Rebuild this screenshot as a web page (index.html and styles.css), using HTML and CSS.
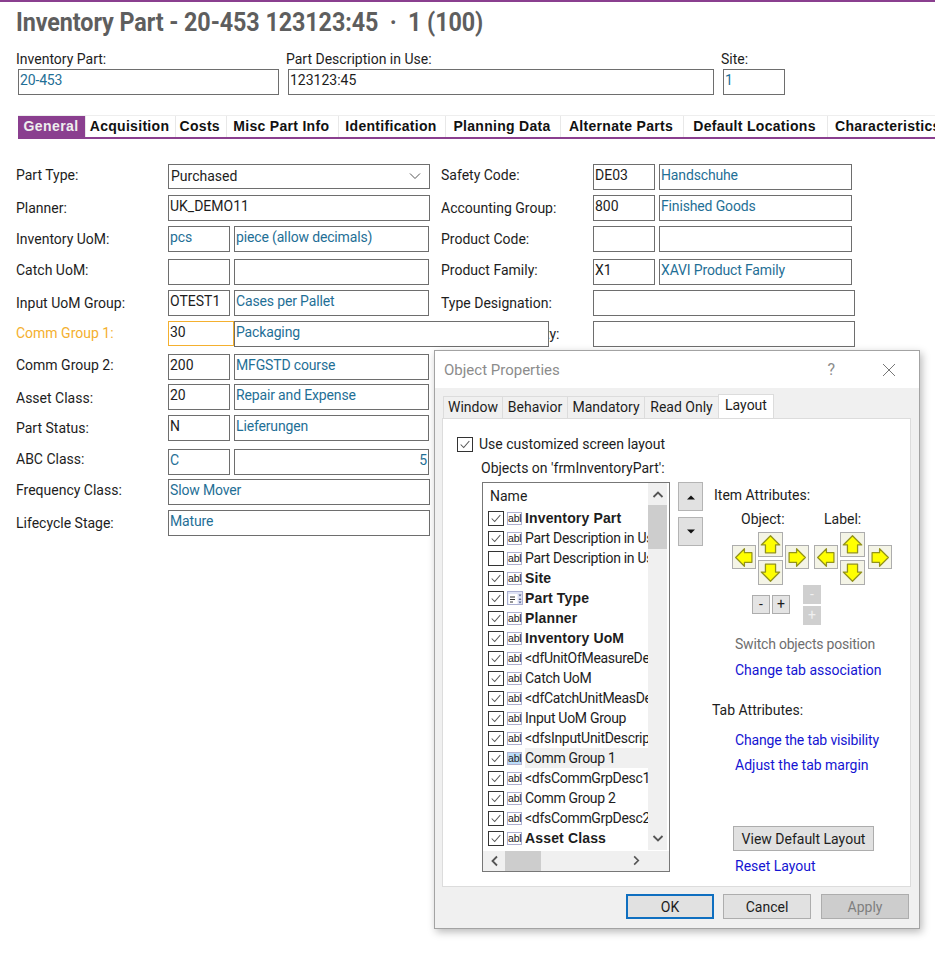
FILE: index.html
```html
<!DOCTYPE html>
<html lang="en">
<head>
<meta charset="utf-8">
<title>Inventory Part</title>
<link rel="stylesheet" href="styles.css">
</head>
<body>
<svg class="defs" aria-hidden="true">
  <symbol id="check" viewBox="0 0 16 15"><path d="M3 7.5 6.5 11 13 3.5" fill="none" stroke="#555" stroke-width="1.2"/></symbol>
  <symbol id="arrow" viewBox="0 0 25 25"><path d="M12.5 3 22.500 13H18V21.500H7V13H2.500Z" fill="#ffff00" stroke="#93931a" stroke-width="1.4" stroke-linejoin="round"/></symbol>
  <symbol id="chev" viewBox="0 0 12 12"><path d="M1.5 8 6 3.5 10.500 8" fill="none" stroke="#555" stroke-width="1.8"/></symbol>
  <symbol id="tri" viewBox="0 0 10 6"><path d="M1 5.500 5 1.500 9 5.500Z" fill="#111"/></symbol>
</svg>
<div class="page">
  <h1 class="title">Inventory Part - 20-453 123123:45 &nbsp;·&nbsp; 1 (100)</h1>
  <div class="head">
    <div class="head-group g1"><label>Inventory Part:</label><div class="box teal w261">20-453</div></div>
    <div class="head-group g2"><label>Part Description in Use:</label><div class="box w426">123123:45</div></div>
    <div class="head-group"><label>Site:</label><div class="box teal w62">1</div></div>
  </div>
  <div class="tabs">
    <div class="tab active">General</div>
    <div class="tab">Acquisition</div>
    <div class="tab">Costs</div>
    <div class="tab">Misc Part Info</div>
    <div class="tab">Identification</div>
    <div class="tab">Planning Data</div>
    <div class="tab">Alternate Parts</div>
    <div class="tab">Default Locations</div>
    <div class="tab last">Characteristics</div>
  </div>
  <div class="form">
    <div class="lab up2">Part Type:</div>
    <div class="box select w262"><span>Purchased</span><svg class="caret" viewBox="0 0 12 8"><path d="M1 1.500 6 6.500 11 1.500" fill="none" stroke="#555" stroke-width="1"/></svg></div>
    <div class="lab up2 rlab">Safety Code:</div>
    <div class="fields"><div class="box w62">DE03</div><div class="box teal w193">Handschuhe</div></div>

    <div class="lab">Planner:</div>
    <div class="box w262">UK_DEMO11</div>
    <div class="lab rlab">Accounting Group:</div>
    <div class="fields"><div class="box w62">800</div><div class="box teal w193">Finished Goods</div></div>

    <div class="lab">Inventory UoM:</div>
    <div class="fields"><div class="box teal w62">pcs</div><div class="box teal w195">piece (allow decimals)</div></div>
    <div class="lab rlab">Product Code:</div>
    <div class="fields"><div class="box w62"></div><div class="box w193"></div></div>

    <div class="lab up2">Catch UoM:</div>
    <div class="fields"><div class="box w62"></div><div class="box w195"></div></div>
    <div class="lab up2 rlab">Product Family:</div>
    <div class="fields"><div class="box w62">X1</div><div class="box teal w193">XAVI Product Family</div></div>

    <div class="lab">Input UoM Group:</div>
    <div class="fields"><div class="box w62">OTEST1</div><div class="box teal w195">Cases per Pallet</div></div>
    <div class="lab rlab">Type Designation:</div>
    <div class="box w262">&nbsp;</div>

    <div class="lab focus">Comm Group 1:</div>
    <div class="fields over"><div class="box active-box">30</div><div class="box teal w315">Packaging</div></div>
    <div class="lab rlab">Dimension/Quality:</div>
    <div class="box w262">&nbsp;</div>

    <div class="lab up2">Comm Group 2:</div>
    <div class="fields"><div class="box w62">200</div><div class="box teal w195">MFGSTD course</div></div>
    <div></div><div></div>

    <div class="lab dn1">Asset Class:</div>
    <div class="fields"><div class="box w62">20</div><div class="box teal w195">Repair and Expense</div></div>
    <div></div><div></div>

    <div class="lab">Part Status:</div>
    <div class="fields"><div class="box w62">N</div><div class="box teal w195">Lieferungen</div></div>
    <div></div><div></div>

    <div class="lab up3">ABC Class:</div>
    <div class="fields"><div class="box teal w62">C</div><div class="box teal w195 right">5</div></div>
    <div></div><div></div>

    <div class="lab up2">Frequency Class:</div>
    <div class="box teal w262">Slow Mover</div>
    <div></div><div></div>

    <div class="lab">Lifecycle Stage:</div>
    <div class="box teal w262">Mature</div>
    <div></div><div></div>
  </div>
</div>

<section class="dialog">
  <header class="dlg-title">
    <span class="dlg-name">Object Properties</span>
    <span class="dlg-help">?</span>
    <svg class="dlg-close" viewBox="0 0 14 14"><path d="M1 1 13 13M13 1 1 13" stroke="#777" stroke-width="1" fill="none"/></svg>
  </header>
  <div class="dlg-tabs">
    <div class="dtab t1">Window</div>
    <div class="dtab t2">Behavior</div>
    <div class="dtab t3">Mandatory</div>
    <div class="dtab t4">Read Only</div>
    <div class="dtab t5 on">Layout</div>
  </div>
  <div class="dlg-page">
    <div class="use-row"><span class="cb big"><svg><use href="#check"/></svg></span><span>Use customized screen layout</span></div>
    <div class="objects">Objects on 'frmInventoryPart':</div>
    <div class="dlg-main">
      <div class="list">
        <div class="list-body">
          <div class="rows">
            <div class="list-head">Name</div>
            <div class="row b"><span class="cb"><svg><use href="#check"/></svg></span><span class="abl">abl</span><span class="name">Inventory Part</span></div>
            <div class="row"><span class="cb"><svg><use href="#check"/></svg></span><span class="abl">abl</span><span class="name">Part Description in Use</span></div>
            <div class="row"><span class="cb"></span><span class="abl">abl</span><span class="name">Part Description in Use</span></div>
            <div class="row b"><span class="cb"><svg><use href="#check"/></svg></span><span class="abl">abl</span><span class="name">Site</span></div>
            <div class="row b"><span class="cb"><svg><use href="#check"/></svg></span><svg class="combo" viewBox="0 0 16 14"><rect x=".5" y=".5" width="15" height="13" fill="#dfe3f5" stroke="#a9aed0"/><rect x="1.500" y="3" width="9" height="10" fill="#fff"/><path d="M3 6h5M3 8.500h5M3 11h3" stroke="#333"/><path d="M11.500 3.500h3l-1.500 2ZM11.500 9h3l-1.500-2ZM11.500 10.500h3l-1.500 2Z" fill="#55608c"/></svg><span class="name">Part Type</span></div>
            <div class="row b"><span class="cb"><svg><use href="#check"/></svg></span><span class="abl">abl</span><span class="name">Planner</span></div>
            <div class="row b"><span class="cb"><svg><use href="#check"/></svg></span><span class="abl">abl</span><span class="name">Inventory UoM</span></div>
            <div class="row"><span class="cb"><svg><use href="#check"/></svg></span><span class="abl">abl</span><span class="name">&lt;dfUnitOfMeasureDesc&gt;</span></div>
            <div class="row"><span class="cb"><svg><use href="#check"/></svg></span><span class="abl">abl</span><span class="name">Catch UoM</span></div>
            <div class="row"><span class="cb"><svg><use href="#check"/></svg></span><span class="abl">abl</span><span class="name">&lt;dfCatchUnitMeasDesc&gt;</span></div>
            <div class="row"><span class="cb"><svg><use href="#check"/></svg></span><span class="abl">abl</span><span class="name">Input UoM Group</span></div>
            <div class="row"><span class="cb"><svg><use href="#check"/></svg></span><span class="abl">abl</span><span class="name">&lt;dfsInputUnitDescription&gt;</span></div>
            <div class="row sel"><span class="cb"><svg><use href="#check"/></svg></span><span class="abl">abl</span><span class="name">Comm Group 1</span></div>
            <div class="row"><span class="cb"><svg><use href="#check"/></svg></span><span class="abl">abl</span><span class="name">&lt;dfsCommGrpDesc1&gt;</span></div>
            <div class="row"><span class="cb"><svg><use href="#check"/></svg></span><span class="abl">abl</span><span class="name">Comm Group 2</span></div>
            <div class="row"><span class="cb"><svg><use href="#check"/></svg></span><span class="abl">abl</span><span class="name">&lt;dfsCommGrpDesc2&gt;</span></div>
            <div class="row b"><span class="cb"><svg><use href="#check"/></svg></span><span class="abl">abl</span><span class="name">Asset Class</span></div>
          </div>
          <div class="vscroll">
            <svg class="chev"><use href="#chev"/></svg>
            <div class="vthumb"></div>
            <svg class="chev down"><use href="#chev"/></svg>
          </div>
        </div>
        <div class="hscroll">
          <svg class="chev left"><use href="#chev"/></svg>
          <div class="hthumb"></div>
          <svg class="chev right"><use href="#chev"/></svg>
        </div>
      </div>
      <div class="updown">
        <div class="ud"><svg class="tri"><use href="#tri"/></svg></div>
        <div class="ud"><svg class="tri flip"><use href="#tri"/></svg></div>
      </div>
      <div class="attrs">
        <div class="at item">Item Attributes:</div>
        <div class="at heads"><span class="h-obj">Object:</span><span class="h-lab">Label:</span></div>
        <div class="pad">
          <div class="ab sl1"><svg class="r-l"><use href="#arrow"/></svg></div>
          <div class="ab up1c"><svg><use href="#arrow"/></svg></div>
          <div class="ab dn1c"><svg class="r-d"><use href="#arrow"/></svg></div>
          <div class="ab sr1"><svg class="r-r"><use href="#arrow"/></svg></div>
          <div class="ab sl2"><svg class="r-l"><use href="#arrow"/></svg></div>
          <div class="ab up2c"><svg><use href="#arrow"/></svg></div>
          <div class="ab dn2c"><svg class="r-d"><use href="#arrow"/></svg></div>
          <div class="ab sr2"><svg class="r-r"><use href="#arrow"/></svg></div>
        </div>
        <div class="sizes">
          <div class="size-on"><div class="sz">-</div><div class="sz">+</div></div>
          <div class="size-off"><div class="sz off">-</div><div class="sz off">+</div></div>
        </div>
        <div class="at indent grey switch">Switch objects position</div>
        <div class="at indent link assoc">Change tab association</div>
        <div class="at tabattr">Tab Attributes:</div>
        <div class="at indent link vis">Change the tab visibility</div>
        <div class="at indent link margin">Adjust the tab margin</div>
        <div class="btn viewdef">View Default Layout</div>
        <div class="at indent link reset">Reset Layout</div>
      </div>
    </div>
  </div>
  <footer class="dlg-foot">
    <div class="btn fb ok">OK</div>
    <div class="btn fb">Cancel</div>
    <div class="btn fb dis">Apply</div>
  </footer>
</section>
</body>
</html>
```

FILE: styles.css
```css
* { box-sizing: border-box; }
html, body { margin: 0; padding: 0; }
body {
  position: relative;
  width: 935px;
  height: 954px;
  overflow: hidden;
  background: #fff;
  color: #1d1d1d;
  font: 14px/18px Roboto, "Noto Sans", sans-serif;
}
.defs { position: absolute; width: 0; height: 0; }
.page { border-top: 2px solid #8a3f8f; }
.title {
  margin: 7px 0 0 16px;
  height: 28px;
  width: 520px;
  font: bold 25px/28px Roboto, "Liberation Sans", sans-serif;
  color: #5e5e5e;
  white-space: nowrap;
  letter-spacing: -0.1px;
  transform: scaleX(0.934);
  transform-origin: left center;
}
.head { display: flex; margin: 12px 0 0 16px; }
.head-group label { display: block; height: 20px; line-height: 20px; }
.head-group .box { margin-left: 2px; }
.g1 { width: 270px; }
.g2 { width: 435px; }
.box {
  flex: none;
  height: 26px;
  padding: 0 0 0 1px;
  border: 1px solid #6e6e6e;
  background: #fff;
  line-height: 20px;
  white-space: nowrap;
}
.teal { color: #1f6f96; letter-spacing: -0.15px; }
.right { text-align: right; padding-right: 1px; }
.w62 { width: 62px; }
.w193 { width: 193px; }
.w195 { width: 195px; }
.w261 { width: 261px; }
.w262 { width: 262px; }
.w315 { width: 315px; }
.w426 { width: 426px; }
.tabs {
  display: grid;
  grid-template-columns: 68px 90px 50.5px 112.5px 107px 115px 123px 144px 107px;
  margin: 20px 0 0 18px;
  height: 24px;
  border-top: 1px solid #eee;
  border-bottom: 2px solid #8a3f8f;
  font: bold 14px/21px "Liberation Sans", sans-serif;
  letter-spacing: 0.3px;
  color: #111;
}
.tab {
  padding-right: 2px;
  text-align: center;
  white-space: nowrap;
  border-right: 1px solid #e8e8e8;
}
.tab.last { border-right: 0; text-align: left; padding: 0 0 0 7px; overflow: hidden; }
.tab.active { background: #8a3f8f; color: #eee; letter-spacing: 0.4px; padding-right: 1px; }
.form {
  display: grid;
  grid-template-columns: 152px 273px 152px 262px;
  grid-template-rows: 31px 31px 33px 31px 31px 33px 30px 31px 34px 30px 31px 26px;
  margin: 25px 0 0 16px;
}
.lab { line-height: 26px; white-space: nowrap; }
.up2 { margin-top: -2px; }
.up3 { margin-top: -3px; }
.dn1 { margin-top: 1px; }
.focus { color: #f4b02f; margin-top: -1px; }
.fields { display: flex; gap: 4px; }
.fields.over { position: relative; z-index: 1; gap: 0; }
.active-box { width: 66px; height: 25px; border-color: #f4b02f; }
.select { display: flex; align-items: center; justify-content: space-between; height: 25px; padding: 0 8px 1px 2px; }
.caret { width: 12px; height: 8px; }

.dialog {
  position: absolute;
  left: 434px;
  top: 350px;
  z-index: 2;
  width: 486px;
  height: 579px;
  border: 1px solid #a3a3a3;
  background: #f0f0f0;
  box-shadow: 2px 3px 8px rgba(0, 0, 0, 0.28);
  display: flex;
  flex-direction: column;
}
.dlg-title {
  flex: none;
  display: flex;
  align-items: center;
  height: 37px;
  padding: 0 0 0 9px;
  background: #fff;
  color: #8c8c8c;
  font-size: 15px;
}
.dlg-name { flex: 1; }
.dlg-help { margin-right: 47px; font-size: 16px; }
.dlg-close { width: 14px; height: 14px; margin-right: 23px; }
.dlg-tabs { flex: none; display: flex; height: 30px; padding: 7px 0 0 8px; }
.dtab {
  height: 22px;
  margin-top: 1px;
  text-align: center;
  line-height: 21px;
  background: #f0f0f0;
  border: 1px solid #dcdcdc;
  border-bottom: 0;
  border-left: 0;
}
.t1 { width: 60px; border-left: 1px solid #dcdcdc; }
.t2 { width: 65px; }
.t3 { width: 77px; }
.t4 { width: 74px; }
.t5 { width: 56px; }
.dtab.on {
  height: 24px;
  margin-top: -1px;
  background: #fff;
  line-height: 21px;
  position: relative;
  z-index: 1;
  border-left: 1px solid #dcdcdc;
  margin-left: -1px;
}
.dlg-page {
  flex: none;
  height: 469px;
  margin-left: 7px;
  width: 469px;
  background: #fff;
  border: 1px solid #dcdcdc;
}
.use-row { display: flex; align-items: center; gap: 6px; margin: 18px 0 0 14px; height: 14px; }
.objects { margin: 8px 0 0 38px; height: 18px; line-height: 18px; }
.dlg-main { display: flex; margin: 5px 0 0 39px; }
.cb {
  flex: none;
  display: block;
  width: 16px;
  height: 15px;
  border: 1px solid #333;
  background: #fff;
}
.cb svg { display: block; width: 14px; height: 13px; }
.cb.big { width: 16px; height: 15px; }
.list { flex: none; width: 188px; height: 390px; border: 1px solid #777; background: #fff; }
.list-body { display: flex; height: 367px; }
.rows { width: 165px; overflow: hidden; padding-left: 5px; }
.list-head { height: 25px; padding-left: 2px; line-height: 26px; }
.row { display: flex; align-items: center; gap: 3px; height: 20px; letter-spacing: -0.3px; white-space: nowrap; }
.row.b .name { font: bold 14px/18px "Liberation Sans", sans-serif; letter-spacing: 0.15px; }
.abl {
  flex: none;
  width: 15px;
  height: 13px;
  border: 1px solid #aeb0d0;
  background: #fff;
  font: 10.500px/11px "Liberation Sans", sans-serif;
  text-align: center;
  letter-spacing: -0.2px;
}
.combo { flex: none; width: 16px; height: 14px; margin-right: -1px; }
.name { flex: 1; }
.row.sel .abl { background: #bcdcf8; }
.row.sel .name { background: #f0f0f0; line-height: 20px; }
.vscroll { position: relative; width: 19px; margin-right: 2px; background: #f0f0f0; display: flex; flex-direction: column; align-items: center; }
.chev { width: 12px; height: 12px; flex: none; }
.vscroll .chev { margin-top: 6px; }
.vthumb { width: 19px; height: 44px; margin-top: 4px; background: #cdcdcd; }
.vscroll .down { margin-top: auto; margin-bottom: 6px; transform: rotate(180deg); }
.hscroll { display: flex; align-items: center; height: 20px; margin-top: 1px; background: #f0f0f0; padding-left: 6px; }
.left { transform: rotate(-90deg); }
.right.chev { transform: rotate(90deg); margin-left: 89px; }
.hthumb { width: 36px; height: 20px; margin-left: 4px; background: #cdcdcd; }
.updown { flex: none; display: flex; flex-direction: column; gap: 6px; margin-left: 8px; width: 25px; }
.ud { height: 29px; background: #e1e1e1; border: 1px solid #b4b4b4; display: flex; align-items: center; justify-content: center; }
.tri { width: 10px; height: 6px; }
.tri.flip { transform: rotate(180deg); }
.attrs { flex: none; margin-left: 9px; width: 200px; }
.at { height: 18px; line-height: 18px; white-space: nowrap; }
.indent { margin-left: 23px; }
.item { margin: 4px 0 0 2px; }
.heads { position: relative; display: flex; margin: 6px 0 0 29px; }
.h-obj { width: 83px; }
.pad {
  display: grid;
  grid-template-columns: 24px 2px 25px 2px 24px 5px 24px 2px 25px 3px 24px;
  grid-template-rows: 13px 12px 3px 9px 16px;
  margin: 4px 0 0 20px;
}
.ab {
  display: flex;
  align-items: center;
  justify-content: center;
  background: #f4f4e6;
  border: 1px solid #adadad;
}
.ab svg { width: 23px; height: 23px; }
.r-l { transform: rotate(-90deg); }
.r-r { transform: rotate(90deg); }
.r-d { transform: rotate(180deg); }
.sl1 { grid-column: 1; grid-row: 2 / 5; }
.up1c { grid-column: 3; grid-row: 1 / 3; }
.dn1c { grid-column: 3; grid-row: 4 / 6; }
.sr1 { grid-column: 5; grid-row: 2 / 5; }
.sl2 { grid-column: 7; grid-row: 2 / 5; }
.up2c { grid-column: 9; grid-row: 1 / 3; }
.dn2c { grid-column: 9; grid-row: 4 / 6; }
.sr2 { grid-column: 11; grid-row: 2 / 5; }
.sizes { display: flex; margin-left: 40px; }
.size-on { display: flex; gap: 2px; margin-top: 10px; }
.size-off { display: flex; flex-direction: column; gap: 2px; margin-left: 13px; }
.sz {
  width: 18px;
  height: 19px;
  background: #e4e4e4;
  border: 1px solid #adadad;
  text-align: center;
  line-height: 17px;
  font-size: 14px;
}
.sz.off { background: #cfcfcf; border-color: #cfcfcf; color: #f0f0f0; }
.grey { color: #6e6e6e; letter-spacing: -0.2px; }
.link { color: #1414d2; }
.switch { margin-top: 10px; }
.assoc { margin-top: 8px; }
.tabattr { margin-top: 22px; }
.vis { margin-top: 12px; letter-spacing: -0.15px; }
.margin { margin-top: 7px; }
.btn {
  background: #e1e1e1;
  border: 1px solid #adadad;
  text-align: center;
  line-height: 24px;
  white-space: nowrap;
}
.viewdef { width: 141px; height: 25px; margin: 52px 0 0 21px; }
.reset { margin-top: 6px; }
.dlg-foot { display: flex; gap: 9px; margin: 7px 0 0 191px; }
.fb { width: 88px; height: 25px; }
.ok { border: 2px solid #0f6fc0; line-height: 22px; }
.dis { background: #cdcdcd; color: #7f7f7f; margin-left: 1px; }
```
